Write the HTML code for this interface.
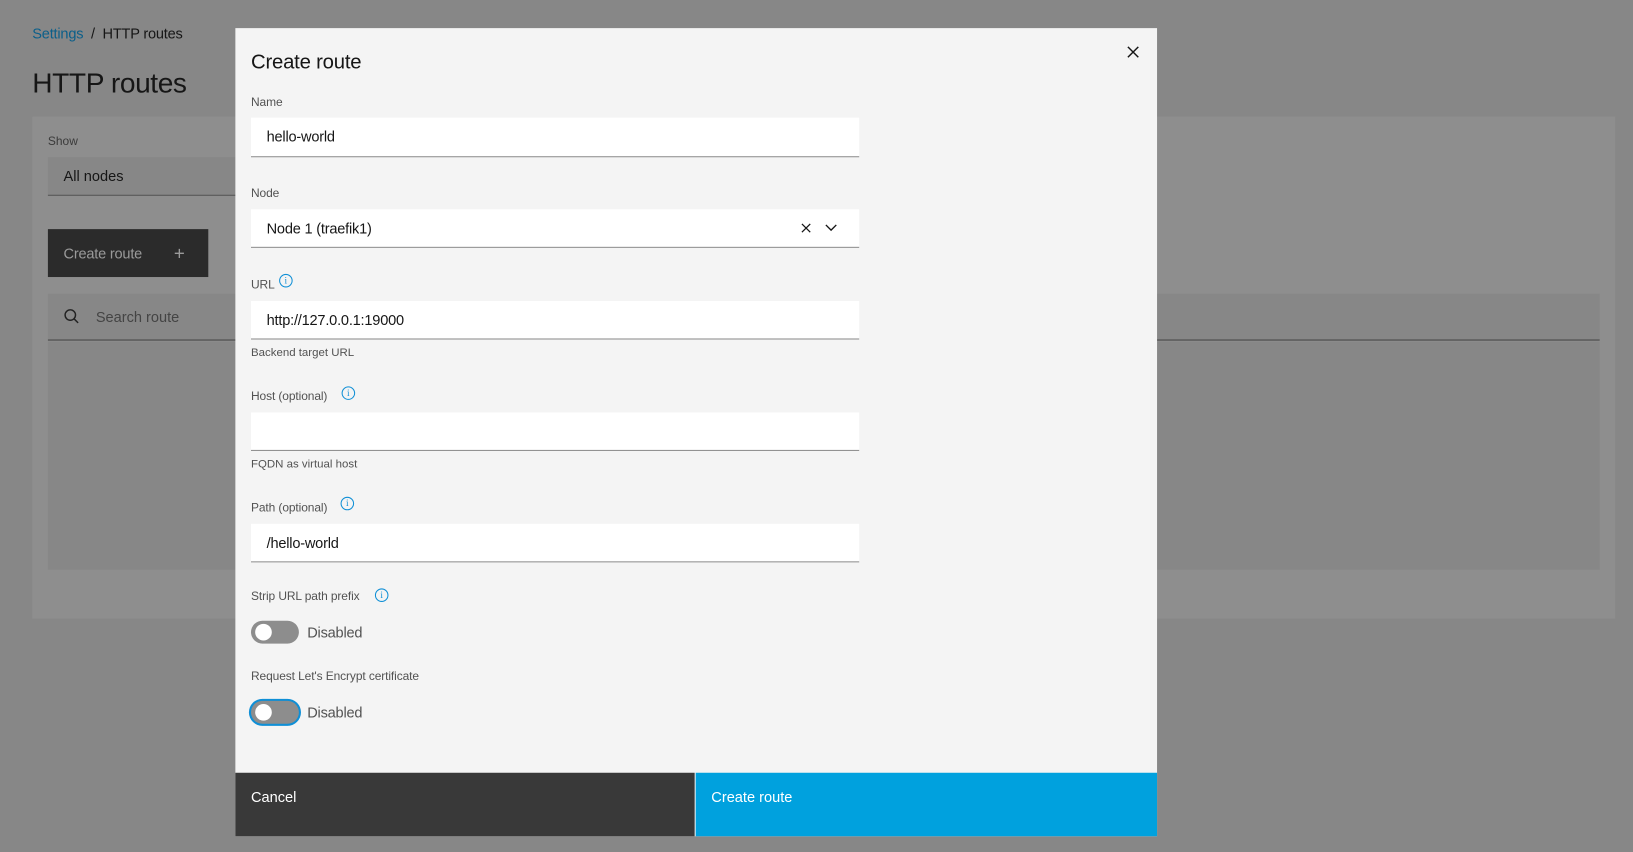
<!DOCTYPE html>
<html><head><meta charset="utf-8"><style>
html,body{margin:0;padding:0;width:1633px;height:852px;overflow:hidden;background:#878787;font-family:"Liberation Sans",sans-serif;}
#w{position:absolute;left:0;top:0;width:1568px;height:818px;transform:scale(1.04145);transform-origin:0 0;}
.a{position:absolute;}
.lbl{position:absolute;font-size:11.5px;color:#525252;letter-spacing:-0.1px;}
.inp{position:absolute;left:241px;width:584px;background:#fff;border-bottom:1px solid #8d8d8d;height:37px;font-size:14px;color:#161616;line-height:37px;box-sizing:border-box;padding-left:15px;letter-spacing:-0.2px;}
.help{position:absolute;font-size:11px;color:#525252;}
.info{position:absolute;width:11px;height:11px;border:1px solid #0f8fd6;border-radius:50%;color:#0f8fd6;font-size:9px;line-height:11px;text-align:center;font-family:"Liberation Serif",serif;}
.tog{position:absolute;left:241px;width:46px;height:22px;border-radius:11px;background:#8d8d8d;}
.tog::after{content:"";position:absolute;left:4px;top:3px;width:16px;height:16px;border-radius:50%;background:#fff;}
.dis{position:absolute;left:295px;font-size:14px;color:#525252;letter-spacing:-0.2px;}
</style></head><body><div id="w">
<div class="a" style="left:31px;top:24px;font-size:14px;color:#161616;letter-spacing:-0.2px"><span style="color:#0b5f8a">Settings</span> &nbsp;/&nbsp; HTTP routes</div>
<div class="a" style="left:31px;top:65px;font-size:27px;color:#161616;letter-spacing:-0.4px">HTTP routes</div>
<div class="a" style="left:31px;top:112px;width:1520px;height:482px;background:#8e8e8e"></div>
<div class="a" style="left:46px;top:130px;font-size:11.5px;color:#3a3a3a">Show</div>
<div class="a" style="left:46px;top:151px;width:200px;height:37px;background:#878787;border-bottom:1px solid #555;box-sizing:border-box;padding-left:15px;line-height:37px;font-size:14px;color:#161616">All nodes</div>
<div class="a" style="left:46px;top:220px;width:154px;height:46px;background:#2b2b2b;color:#9a9a9a;font-size:14px;line-height:46px;box-sizing:border-box;padding-left:15px;letter-spacing:-0.2px">Create route<span style="position:absolute;left:121px;font-size:18px">+</span></div>
<div class="a" style="left:46px;top:282px;width:1490px;height:45px;background:#878787;border-bottom:1px solid #444;box-sizing:border-box;padding-left:46px;line-height:45px;font-size:14px;color:#444">Search route</div>
<svg class="a" style="left:61px;top:296px" width="16" height="16"><circle cx="6.5" cy="6.5" r="5" stroke="#222" stroke-width="1.4" fill="none"/><line x1="10" y1="10" x2="14" y2="14" stroke="#222" stroke-width="1.4"/></svg>
<div class="a" style="left:46px;top:328px;width:1490px;height:219px;background:#878787"></div>

<div class="a" style="left:226px;top:27px;width:885px;height:776px;background:#f4f4f4"></div>
<div class="a" style="left:241px;top:49px;font-size:19.5px;color:#161616;letter-spacing:-0.2px">Create route</div>
<svg class="a" style="left:1082px;top:44px" width="12" height="12"><path d="M1 1L11 11M11 1L1 11" stroke="#161616" stroke-width="1.4"/></svg>
<div class="lbl" style="left:241px;top:93px">Name</div>
<div class="inp" style="top:113px;height:38px">hello-world</div>
<div class="lbl" style="left:241px;top:180px">Node</div>
<div class="inp" style="top:201px">Node 1 (traefik1)</div>
<svg class="a" style="left:769px;top:214px" width="10" height="10"><path d="M1 1L9 9M9 1L1 9" stroke="#161616" stroke-width="1.2"/></svg>
<svg class="a" style="left:792px;top:215px" width="12" height="8"><path d="M1 1L6 6L11 1" stroke="#161616" stroke-width="1.3" fill="none"/></svg>
<div class="lbl" style="left:241px;top:268px">URL</div><div class="info" style="left:268px;top:263px">i</div>
<div class="inp" style="top:289px">http://127.0.0.1:19000</div>
<div class="help" style="left:241px;top:333px">Backend target URL</div>
<div class="lbl" style="left:241px;top:375px">Host (optional)</div><div class="info" style="left:328px;top:371px">i</div>
<div class="inp" style="top:396px"></div>
<div class="help" style="left:241px;top:440px">FQDN as virtual host</div>
<div class="lbl" style="left:241px;top:482px">Path (optional)</div><div class="info" style="left:327px;top:477px">i</div>
<div class="inp" style="top:503px">/hello-world</div>
<div class="lbl" style="left:241px;top:567px">Strip URL path prefix</div><div class="info" style="left:360px;top:565px">i</div>
<div class="tog" style="top:596px"></div><div class="dis" style="top:599px">Disabled</div>
<div class="lbl" style="left:241px;top:644px">Request Let's Encrypt certificate</div>
<div class="tog" style="top:673px;box-shadow:0 0 0 2px #0f8fd6"></div><div class="dis" style="top:676px">Disabled</div>
<div class="a" style="left:226px;top:742px;width:441px;height:61px;background:#393939;color:#fff;font-size:14px;box-sizing:border-box;padding:15px">Cancel</div>
<div class="a" style="left:668px;top:742px;width:443px;height:61px;background:#00a1de;color:#fff;font-size:14px;box-sizing:border-box;padding:15px">Create route</div>
</div></body></html>
